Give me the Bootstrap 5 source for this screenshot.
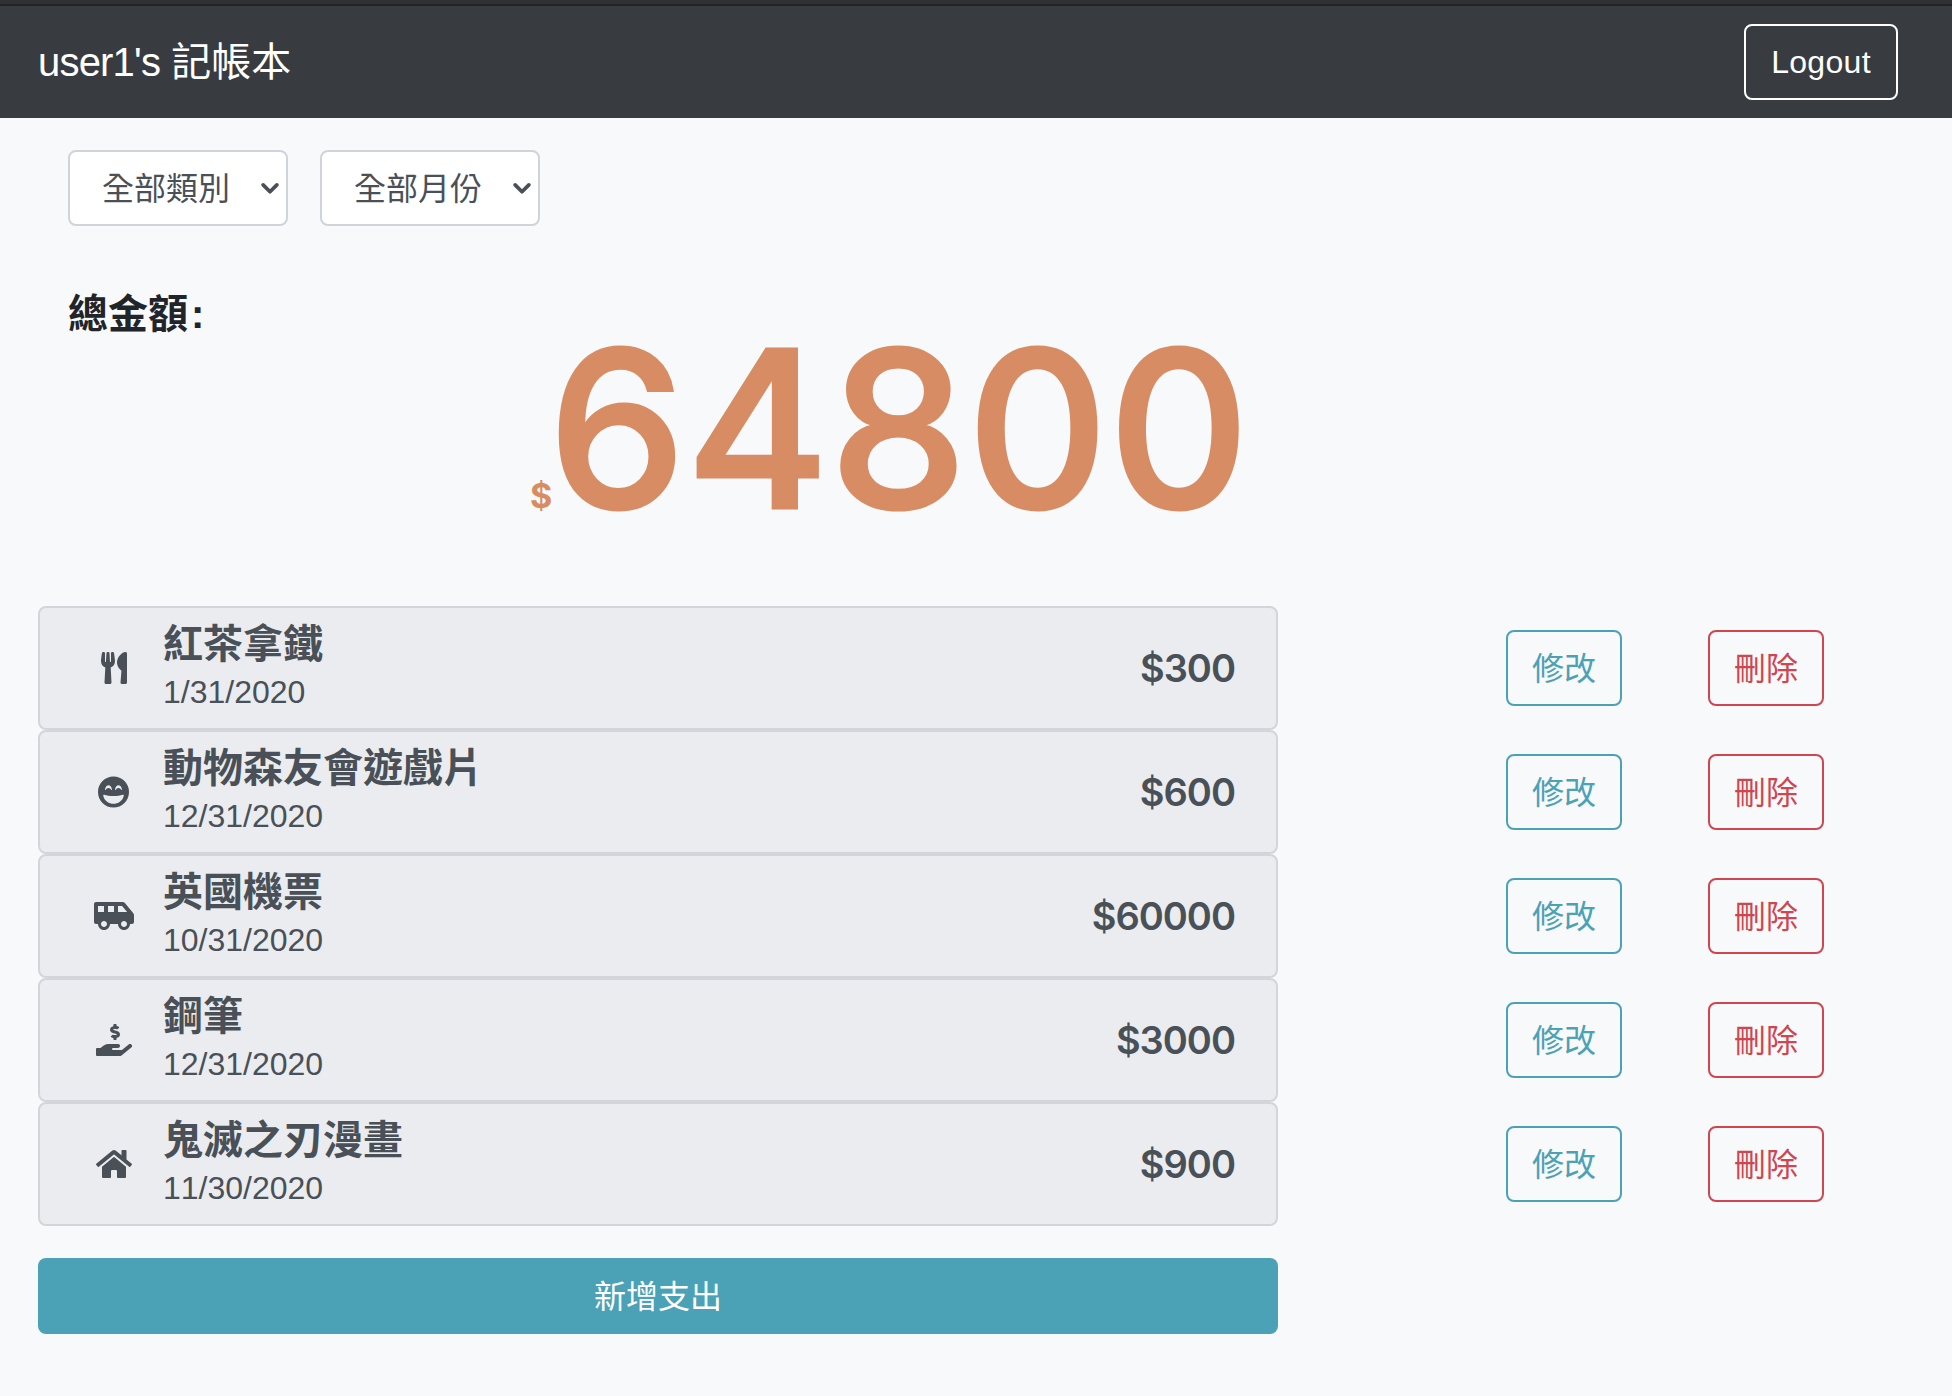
<!DOCTYPE html>
<html lang="zh-Hant">
<head>
<meta charset="utf-8">
<title>user1's 記帳本</title>
<link href="https://cdn.jsdelivr.net/npm/bootstrap@5.3.0/dist/css/bootstrap.min.css" rel="stylesheet">
<style>
:root{--bs-border-width:2px;--bs-border-radius:8px;--bs-body-bg:#f8f9fa;--bs-body-color:#212529;
--bs-body-font-family:"Liberation Sans","Noto Sans CJK TC",sans-serif;}
html{font-size:32px}
body{background:#f8f9fa;min-height:1396px;font-family:"Liberation Sans","Noto Sans CJK TC",sans-serif}
.top-strip{height:6px;background:#2f3134;border-bottom:2px solid #212326}
.app-nav{background:#383c41;height:112px;padding:0 54px 0 38px}
.app-brand{font-size:40px;color:#fff;line-height:60px;padding:0;margin:0}
.brand-latin{letter-spacing:-.8px}
.logout-btn{width:154px;height:76px;color:#fff;border:2px solid #fff;border-radius:8px;background:transparent;padding:12px 0;letter-spacing:.3px}
.filter-bar{padding:32px 68px 0;gap:32px}
.filter-select{width:220px;height:76px;padding:13px 40px 11px 32px;border:2px solid #ced4da;color:#495057;background-color:#fff;border-radius:8px;
background-position:right 6px center;background-size:20px 20px;
--bs-form-select-bg-img:url("data:image/svg+xml,%3csvg xmlns='http://www.w3.org/2000/svg' viewBox='0 0 16 16'%3e%3cpath fill='none' stroke='%23495057' stroke-linecap='round' stroke-linejoin='round' stroke-width='3' d='M2.5 5.5l5.5 5.5 5.5-5.5'/%3e%3c/svg%3e")}
.total-label{font-size:40px;line-height:48px;font-weight:700;margin:64px 0 0 68px;color:#212529}
.total-colon{font-family:"Liberation Sans",sans-serif;margin-left:3px}
.total-amount{color:#d78c63;font-family:Inter,sans-serif;font-weight:500;font-size:218px;line-height:183px;padding:0 0 19px 530px;white-space:nowrap}
.total-digits{-webkit-text-stroke:3px #d78c63;letter-spacing:.5px}
.total-cur{font-size:34px;font-weight:700;font-family:Inter,sans-serif;margin-right:-4px}
.ledger{padding:0 0 0 38px}
.ledger-row{height:124px}
.ledger-item.list-group-item{width:1240px;height:124px;border:2px solid #d2d6da;border-radius:8px;background:#eaecef;color:#495057;padding:12px 41px 12px 40px;flex:none}
.ledger-ico{width:67px;flex:none;margin-right:16px}
.ledger-ico svg{height:32px;fill:#495057;display:block}
.ledger-title{font-size:40px;line-height:48px;font-weight:700}
.ledger-date{font-size:32px;line-height:48px;font-kerning:none}
.ledger-amt{font-family:Inter,sans-serif;font-weight:600;font-size:38px;letter-spacing:-1px}
.act-btn{width:116px;height:76px;padding:13px 0 11px;background:transparent;border-radius:8px;border:2px solid}
.act-edit{color:#4ba1b6;border-color:#4ba1b6;margin-left:228px}
.act-del{color:#cf4550;border-color:#cf4550;margin-left:86px}
.add-btn{width:1240px;height:76px;margin:32px 0 0;background:#4ba1b6;color:#fff;border:0;border-radius:8px;padding:13px 0 11px}
</style>
</head>
<body>
<div class="top-strip"></div>
<nav class="app-nav d-flex align-items-center justify-content-between">
  <span class="app-brand"><span class="brand-latin">user1's</span> 記帳本</span>
  <button class="btn logout-btn" type="button">Logout</button>
</nav>
<div class="filter-bar d-flex">
  <select class="form-select filter-select"><option>全部類別</option></select>
  <select class="form-select filter-select"><option>全部月份</option></select>
</div>
<h5 class="total-label">總金額<span class="total-colon">:</span></h5>
<div class="total-amount"><span class="total-cur">$</span><span class="total-digits">64800</span></div>
<div class="ledger">
  <div class="ledger-row d-flex align-items-center">
    <div class="list-group-item ledger-item d-flex align-items-center">
      <div class="ledger-ico d-flex justify-content-center"><svg viewBox="0 0 416 512"><path d="M207.9 15.2c.8 4.7 16.1 94.5 16.1 128.8 0 52.3-27.8 89.6-68.9 104.6L168 486.7c.7 13.7-10.2 25.3-24 25.3H80c-13.7 0-24.7-11.5-24-25.3l12.9-238.1C27.7 233.6 0 196.2 0 144 0 109.6 15.3 19.9 16.1 15.2 19.3-5.1 61.4-5.4 64 16.3v141.2c1.3 3.4 15.1 3.2 16 0 1.4-25.3 7.9-139.2 8-141.8 3.3-20.8 44.7-20.8 47.9 0 .2 2.7 6.6 116.5 8 141.8.9 3.2 14.8 3.4 16 0V16.3c2.6-21.6 44.8-21.4 48-1.1zm119.2 285.7l-15 185.1c-1.2 14 9.9 26 23.9 26h56c13.3 0 24-10.7 24-24V24c0-13.2-10.7-24-24-24-82.5 0-221.4 178.5-64.9 300.9z"/></svg></div>
      <div><div class="ledger-title">紅茶拿鐵</div><div class="ledger-date">1/31/2020</div></div>
      <div class="ledger-amt ms-auto">$300</div>
    </div>
    <button class="btn act-btn act-edit" type="button">修改</button>
    <button class="btn act-btn act-del" type="button">刪除</button>
  </div>
  <div class="ledger-row d-flex align-items-center">
    <div class="list-group-item ledger-item d-flex align-items-center">
      <div class="ledger-ico d-flex justify-content-center"><svg viewBox="0 0 496 512"><path fill-rule="evenodd" d="M248 8a248 248 0 1 0 0 496 248 248 0 0 0 0-496zM100 300c40 14 90 20 148 20s108-6 148-20c10-3 18 5 16 15-14 84-96 129-164 129S98 399 84 315c-2-10 6-18 16-15zM112 216c6-44 32-68 56-68s50 24 56 68c1 8-9 11-13 5-10-16-24-29-43-29s-33 13-43 29c-4 6-14 3-13-5zm160 0c6-44 32-68 56-68s50 24 56 68c1 8-9 11-13 5-10-16-24-29-43-29s-33 13-43 29c-4 6-14 3-13-5z"/></svg></div>
      <div><div class="ledger-title">動物森友會遊戲片</div><div class="ledger-date">12/31/2020</div></div>
      <div class="ledger-amt ms-auto">$600</div>
    </div>
    <button class="btn act-btn act-edit" type="button">修改</button>
    <button class="btn act-btn act-del" type="button">刪除</button>
  </div>
  <div class="ledger-row d-flex align-items-center">
    <div class="list-group-item ledger-item d-flex align-items-center">
      <div class="ledger-ico d-flex justify-content-center"><svg viewBox="0 0 640 512"><path d="M628.88 210.65L494.39 49.27A48.01 48.01 0 0 0 457.52 32H32C14.33 32 0 46.33 0 64v288c0 17.67 14.33 32 32 32h32c0 53.02 42.98 96 96 96s96-42.98 96-96h128c0 53.02 42.98 96 96 96s96-42.98 96-96h32c17.67 0 32-14.33 32-32V241.38c0-11.23-3.94-22.1-11.12-30.73zM64 192V96h96v96H64zm96 240c-26.51 0-48-21.49-48-48s21.49-48 48-48 48 21.49 48 48-21.49 48-48 48zm160-240h-96V96h96v96zm160 240c-26.51 0-48-21.49-48-48s21.49-48 48-48 48 21.49 48 48-21.49 48-48 48zm-96-240V96h66.02l80 96H384z"/></svg></div>
      <div><div class="ledger-title">英國機票</div><div class="ledger-date">10/31/2020</div></div>
      <div class="ledger-amt ms-auto">$60000</div>
    </div>
    <button class="btn act-btn act-edit" type="button">修改</button>
    <button class="btn act-btn act-del" type="button">刪除</button>
  </div>
  <div class="ledger-row d-flex align-items-center">
    <div class="list-group-item ledger-item d-flex align-items-center">
      <div class="ledger-ico d-flex justify-content-center"><svg viewBox="0 0 576 512"><path d="M271.06,144.3l54.27,14.3a8.59,8.59,0,0,1,6.63,8.1c0,4.6-4.09,8.4-9.12,8.4h-35.6a30,30,0,0,1-11.19-2.2c-5.24-2.2-11.28-1.7-15.3,2l-19,17.5a11.68,11.68,0,0,0-2.25,2.66,11.42,11.42,0,0,0,3.88,15.74,83.77,83.77,0,0,0,34.51,11.5V240c0,8.8,7.83,16,17.37,16h17.37c9.55,0,17.38-7.2,17.38-16V221.9c32.93-3.6,57.84-31,53.5-63-3.15-23-22.46-41.3-46.56-47.7L282.68,97.4a8.59,8.59,0,0,1-6.63-8.1c0-4.6,4.09-8.4,9.12-8.4h35.6A30,30,0,0,1,332,83.1c5.23,2.2,11.28,1.7,15.3-2l19-17.5A11.31,11.31,0,0,0,368.47,61a11.43,11.43,0,0,0-3.84-15.78,83.82,83.82,0,0,0-34.52-11.5V16c0-8.8-7.82-16-17.37-16H295.37C285.82,0,278,7.2,278,16V34.1c-32.89,3.6-57.85,31-53.51,63C227.63,120.1,247,138.4,271.06,144.3Z"/><path d="M565.27 328.1c-11.8-10.7-30.2-10-42.6 0L430.3 402a63.64 63.64 0 0 1-40 14H272a16 16 0 0 1 0-32h78.29c15.9 0 30.71-10.89 33.25-26.59a32 32 0 0 0-31.6-37.41h-160a117.7 117.7 0 0 0-74.12 26.29L71.3 384H16a16 16 0 0 0-16 16v96a16 16 0 0 0 16 16h356.77a64 64 0 0 0 40-14l151.2-121a32 32 0 0 0 1.3-48.9z"/></svg></div>
      <div><div class="ledger-title">鋼筆</div><div class="ledger-date">12/31/2020</div></div>
      <div class="ledger-amt ms-auto">$3000</div>
    </div>
    <button class="btn act-btn act-edit" type="button">修改</button>
    <button class="btn act-btn act-del" type="button">刪除</button>
  </div>
  <div class="ledger-row d-flex align-items-center">
    <div class="list-group-item ledger-item d-flex align-items-center">
      <div class="ledger-ico d-flex justify-content-center"><svg viewBox="0 0 576 512"><path d="M280.37 148.26L96 300.11V464a16 16 0 0 0 16 16l112.06-.29a16 16 0 0 0 15.92-16V368a16 16 0 0 1 16-16h64a16 16 0 0 1 16 16v95.64a16 16 0 0 0 16 16.05L464 480a16 16 0 0 0 16-16V300L295.67 148.26a12.19 12.19 0 0 0-15.3 0zM571.6 251.47L488 182.56V44.05a12 12 0 0 0-12-12h-56a12 12 0 0 0-12 12v72.61L318.47 43a48 48 0 0 0-61 0L4.34 251.47a12 12 0 0 0-1.6 16.9l25.5 31A12 12 0 0 0 45.15 301l235.22-193.74a12.19 12.19 0 0 1 15.3 0L530.9 301a12 12 0 0 0 16.9-1.6l25.5-31a12 12 0 0 0-1.7-16.93z"/></svg></div>
      <div><div class="ledger-title">鬼滅之刃漫畫</div><div class="ledger-date">11/30/2020</div></div>
      <div class="ledger-amt ms-auto">$900</div>
    </div>
    <button class="btn act-btn act-edit" type="button">修改</button>
    <button class="btn act-btn act-del" type="button">刪除</button>
  </div>
  <button class="btn add-btn d-block" type="button">新增支出</button>
</div>
<script src="https://cdn.jsdelivr.net/npm/bootstrap@5.3.0/dist/js/bootstrap.bundle.min.js"></script>
</body>
</html>
